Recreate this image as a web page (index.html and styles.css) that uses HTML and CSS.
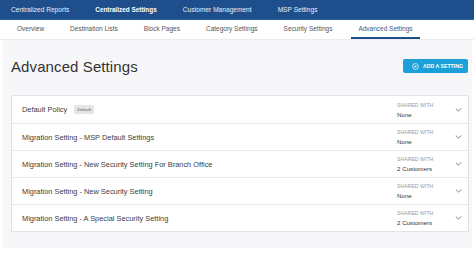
FILE: index.html
```html
<!DOCTYPE html>
<html>
<head>
<meta charset="utf-8">
<link rel="stylesheet" href="styles.css">
</head>
<body>
<nav class="topnav">
  <span class="top-item">Centralized Reports</span>
  <span class="top-item active">Centralized Settings</span>
  <span class="top-item">Customer Management</span>
  <span class="top-item">MSP Settings</span>
</nav>
<nav class="subnav">
  <span class="sub-item">Overview</span>
  <span class="sub-item">Destination Lists</span>
  <span class="sub-item">Block Pages</span>
  <span class="sub-item">Category Settings</span>
  <span class="sub-item">Security Settings</span>
  <span class="sub-item active">Advanced Settings</span>
</nav>
<main class="panel">
  <header class="page-head">
    <h1 class="title">Advanced Settings</h1>
    <button class="add-btn"><svg class="add-icon" viewBox="0 0 10 10" width="7" height="7"><circle cx="5" cy="5" r="4.2" fill="none" stroke="#fff" stroke-width="1"/><circle cx="5" cy="5" r="1.6" fill="#fff"/></svg>ADD A SETTING</button>
  </header>
  <section class="card">
    <div class="row">
      <div class="name">Default Policy <span class="badge">Default</span></div>
      <div class="shared"><div class="shared-label">SHARED WITH</div><div class="shared-val">None</div></div>
      <svg class="chev" viewBox="0 0 8 5" width="7" height="4"><path d="M0.5 0.5 L4 4 L7.5 0.5" fill="none" stroke="#555" stroke-width="0.9"/></svg>
    </div>
    <div class="row">
      <div class="name">Migration Setting - MSP Default Settings</div>
      <div class="shared"><div class="shared-label">SHARED WITH</div><div class="shared-val">None</div></div>
      <svg class="chev" viewBox="0 0 8 5" width="7" height="4"><path d="M0.5 0.5 L4 4 L7.5 0.5" fill="none" stroke="#555" stroke-width="0.9"/></svg>
    </div>
    <div class="row">
      <div class="name">Migration Setting - New Security Setting For Branch Office</div>
      <div class="shared"><div class="shared-label">SHARED WITH</div><div class="shared-val">2 Customers</div></div>
      <svg class="chev" viewBox="0 0 8 5" width="7" height="4"><path d="M0.5 0.5 L4 4 L7.5 0.5" fill="none" stroke="#555" stroke-width="0.9"/></svg>
    </div>
    <div class="row">
      <div class="name">Migration Setting - New Security Setting</div>
      <div class="shared"><div class="shared-label">SHARED WITH</div><div class="shared-val">None</div></div>
      <svg class="chev" viewBox="0 0 8 5" width="7" height="4"><path d="M0.5 0.5 L4 4 L7.5 0.5" fill="none" stroke="#555" stroke-width="0.9"/></svg>
    </div>
    <div class="row">
      <div class="name">Migration Setting - A Special Security Setting</div>
      <div class="shared"><div class="shared-label">SHARED WITH</div><div class="shared-val">2 Customers</div></div>
      <svg class="chev" viewBox="0 0 8 5" width="7" height="4"><path d="M0.5 0.5 L4 4 L7.5 0.5" fill="none" stroke="#555" stroke-width="0.9"/></svg>
    </div>
  </section>
</main>
</body>
</html>
```
FILE: styles.css
```css
* { box-sizing: border-box; }
html, body { margin: 0; padding: 0; }
body {
  width: 474px;
  height: 256px;
  overflow: hidden;
  background: #ffffff;
  font-family: "Liberation Sans", Arial, sans-serif;
  color: #333;
}
.topnav {
  height: 20px;
  background: #1f4e8c;
  border-bottom: 1px solid #2d63a8;
  display: flex;
  align-items: center;
  padding-left: 11px;
  gap: 26px;
}
.top-item {
  color: #e6eef8;
  font-size: 6.6px;
}
.top-item.active { font-weight: bold; color: #fff; font-size: 6.4px; }
.subnav {
  height: 20px;
  background: #fff;
  display: flex;
  align-items: stretch;
  padding-left: 10px;
  gap: 12px;
  border-bottom: 1px solid #ececf0;
}
.sub-item {
  font-size: 6.5px;
  color: #555;
  padding: 0 7px;
  display: flex;
  align-items: center;
  border-bottom: 2px solid transparent;
}
.sub-item.active {
  color: #3d5c85;
  border-bottom: 2px solid #1f4e8c;
}
.panel {
  background: #f7f7f9;
  margin: 0 2px;
  padding: 0 3px 16px 9px;
}
.page-head {
  height: 55px;
  display: flex;
  align-items: center;
  justify-content: space-between;
  padding-bottom: 3px;
}
.title {
  margin: 0;
  font-size: 15px;
  font-weight: normal;
  color: #333;
  letter-spacing: 0.1px;
}
.add-btn {
  background: #1ba0d8;
  color: #fff;
  border: none;
  border-radius: 2px;
  height: 14px;
  width: 65px;
  padding: 0 0 0 9px;
  font-family: inherit;
  font-size: 5.2px;
  font-weight: bold;
  display: flex;
  align-items: center;
  gap: 4px;
  margin-right: 1px;
}
.add-icon { display: block; }
.card {
  background: #fff;
  border: 1px solid #e3e3e6;
}
.row {
  height: 27px;
  display: flex;
  align-items: center;
  padding: 0 6px 0 10px;
  border-top: 1px solid #e8e8eb;
}
.row:first-child { border-top: none; }
.name {
  flex: 1;
  font-size: 7.4px;
  color: #3c3c3c;
  display: flex;
  align-items: center;
  gap: 7px;
}
.badge {
  background: #e6e6e6;
  color: #555;
  font-size: 4.4px;
  padding: 2px 3px;
  border-radius: 1px;
}
.shared {
  width: 58px;
  display: flex;
  flex-direction: column;
  gap: 3px;
}
.shared-label {
  font-size: 5.2px;
  color: #9a9a9a;
}
.shared-val {
  font-size: 6.2px;
  color: #333;
}
.chev { display: block; }
```
